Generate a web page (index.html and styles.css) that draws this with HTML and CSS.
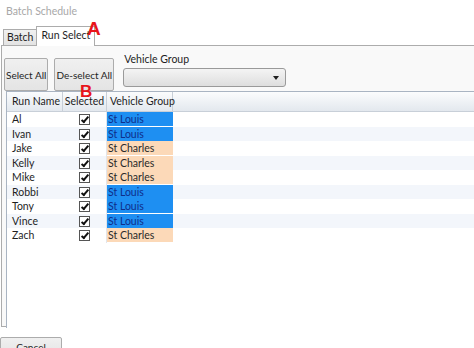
FILE: index.html
```html
<!DOCTYPE html>
<html lang="en">
<head>
<meta charset="UTF-8">
<title>Batch Schedule</title>
<link rel="stylesheet" href="styles.css">
</head>
<body>

<div class="window">
  <div class="title">Batch Schedule</div>

  <div class="tabs">
    <div class="tab">Batch</div>
    <div class="tab active">Run Select</div>
    <span class="mark mark-a">A</span>
  </div>

  <div class="panel">
    <div class="toolbar">
      <button class="btn">Select All</button>
      <button class="btn">De-select All</button>
      <div class="field">
        <label>Vehicle Group</label>
        <div class="combo"><span class="caret"></span></div>
      </div>
    </div>

    <div class="grid">
      <span class="mark mark-b">B</span>
      <div class="row head">
        <div class="cell c-name">Run Name</div>
        <div class="cell c-sel">Selected</div>
        <div class="cell c-grp">Vehicle Group</div>
        <div class="cell c-fill"></div>
      </div>
      <div class="row">
        <div class="cell c-name">Al</div>
        <div class="cell c-sel"><span class="check"></span></div>
        <div class="cell c-grp"><span class="grp louis">St Louis</span></div>
      </div>
      <div class="row alt">
        <div class="cell c-name">Ivan</div>
        <div class="cell c-sel"><span class="check"></span></div>
        <div class="cell c-grp"><span class="grp louis">St Louis</span></div>
      </div>
      <div class="row">
        <div class="cell c-name">Jake</div>
        <div class="cell c-sel"><span class="check"></span></div>
        <div class="cell c-grp"><span class="grp charles">St Charles</span></div>
      </div>
      <div class="row alt">
        <div class="cell c-name">Kelly</div>
        <div class="cell c-sel"><span class="check"></span></div>
        <div class="cell c-grp"><span class="grp charles">St Charles</span></div>
      </div>
      <div class="row">
        <div class="cell c-name">Mike</div>
        <div class="cell c-sel"><span class="check"></span></div>
        <div class="cell c-grp"><span class="grp charles">St Charles</span></div>
      </div>
      <div class="row alt">
        <div class="cell c-name">Robbi</div>
        <div class="cell c-sel"><span class="check"></span></div>
        <div class="cell c-grp"><span class="grp louis">St Louis</span></div>
      </div>
      <div class="row">
        <div class="cell c-name">Tony</div>
        <div class="cell c-sel"><span class="check"></span></div>
        <div class="cell c-grp"><span class="grp louis">St Louis</span></div>
      </div>
      <div class="row alt">
        <div class="cell c-name">Vince</div>
        <div class="cell c-sel"><span class="check"></span></div>
        <div class="cell c-grp"><span class="grp louis">St Louis</span></div>
      </div>
      <div class="row">
        <div class="cell c-name">Zach</div>
        <div class="cell c-sel"><span class="check"></span></div>
        <div class="cell c-grp"><span class="grp charles">St Charles</span></div>
      </div>
    </div>
  </div>

  <button class="btn cancel">Cancel</button>
</div>

</body>
</html>
```

FILE: styles.css
```css
html, body { margin: 0; padding: 0; background: #fff; }
body {
  width: 474px;
  height: 348px;
  overflow: hidden;
  font-family: "Lato", "Liberation Sans", sans-serif;
  font-size: 10.5px;
  color: #1e1e1e;
}
.window { position: relative; }

.title { color: #a8a8a8; padding: 5px 0 0 6px; height: 17px; }

/* tabs */
.tabs { position: relative; display: flex; align-items: flex-end; height: 20px; margin-left: 3px; margin-top: 3px; }
.tab {
  height: 15px;
  padding: 0 3px;
  line-height: 15px;
  border: 1px solid #acacac;
  border-bottom: none;
  background: linear-gradient(#f0f0f0, #e3e3e3);
  white-space: nowrap;
}
.tab.active {
  height: 19px;
  line-height: 16px;
  padding: 0 4px;
  margin-bottom: -1px;
  margin-left: -1px;
  background: #fff;
  position: relative;
  z-index: 1;
}
.mark { position: absolute; z-index: 3; color: #e8141b; font-weight: bold; font-family: "Liberation Sans", sans-serif; line-height: 1; }
.mark-a { left: 84px; top: -6px; font-size: 19px; }
.mark-b { left: 73px; top: -9px; font-size: 17px; }

/* panel */
.panel {
  height: 282px;
  margin-left: 1px;
  border: 1px solid #acacac;
  border-right: none;
  background: #f9f9f9;
  box-sizing: border-box;
  padding: 12px 0 0 2px;
}
.toolbar { display: flex; align-items: flex-start; gap: 6px; height: 33px; }
.btn {
  font: inherit;
  font-size: 10px;
  color: #1e1e1e;
  height: 33px;
  padding: 0 1px;
  border: 1px solid #acacac;
  border-radius: 2px;
  background: linear-gradient(#f0f0f0, #e4e4e4);
  white-space: nowrap;
}
.field { margin-left: 3px; margin-top: -5px; }
.field label { display: block; height: 13px; line-height: 13px; margin-left: 1px; }
.combo {
  position: relative;
  width: 161px;
  height: 17px;
  margin-top: 2px;
  border: 1px solid #9a9a9a;
  border-radius: 3px;
  background: linear-gradient(#f4f4f4, #dedede);
}
.caret {
  position: absolute;
  right: 6px;
  top: 7px;
  border-left: 3px solid transparent;
  border-right: 3px solid transparent;
  border-top: 4px solid #1e1e1e;
}

/* grid */
.grid {
  position: relative;
  height: 236px;
  margin-left: 2px;
  border-top: 1px solid #a9b4c2;
  border-left: 1px solid #a9b4c2;
  background: #fff;
}
.row { display: flex; height: 14.5px; line-height: 14.5px; white-space: nowrap; }
.row.alt { background: #f3f6fb; }
.row.head {
  height: 19px;
  line-height: 19px;
  background: linear-gradient(#fbfcfd, #e3e8ee);
  border-bottom: 1px solid #c8cfd8;
}
.cell { box-sizing: border-box; }
.head .cell { border-right: 1px solid #c8cfd8; }
.c-name { width: 56px; padding-left: 5px; }
.c-sel { width: 44px; text-align: center; border-right: 1px solid #e2e5ea; }
.c-grp { width: 66px; }
.head .c-name { padding-left: 5px; }
.head .c-grp { padding-left: 3px; }
.c-fill { flex: 1; border-right: none !important; }

.grp { display: block; height: 14px; line-height: 14px; padding-left: 1px; }
.grp.louis { background: #1e8ff2; color: #0f2e8a; }
.grp.charles { background: #fcd9b8; color: #2a2a2a; }

.check {
  display: inline-block;
  position: relative;
  width: 9px;
  height: 9px;
  margin-top: 2px;
  vertical-align: top;
  border: 1px solid #555;
  background: #fff;
}
.check::after {
  content: "";
  position: absolute;
  left: 3px;
  top: 0;
  width: 2px;
  height: 6px;
  border-right: 2px solid #111;
  border-bottom: 2px solid #111;
  transform: rotate(40deg);
}

.cancel { display: block; height: 20px; width: 62px; margin-top: 10px; padding: 0; }
```
